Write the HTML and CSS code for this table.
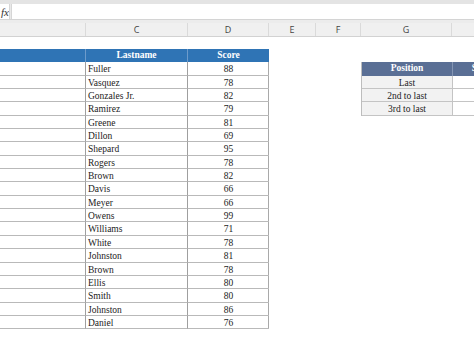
FILE: index.html
```html
<!DOCTYPE html>
<html>
<head>
<meta charset="utf-8">
<link rel="stylesheet" href="styles.css">
</head>
<body>
<div class="app">
  <div class="topstrip"></div>
  <div class="formula">
    <div class="fx"><span>fx</span></div>
    <div class="fsep"></div>
    <div class="finput"></div>
  </div>
  <div class="midstrip"></div>
  <div class="colheads">
    <div class="ch w-b"></div>
    <div class="ch w-c">C</div>
    <div class="ch w-d">D</div>
    <div class="ch w-e">E</div>
    <div class="ch w-f">F</div>
    <div class="ch w-g">G</div>
    <div class="ch w-h"></div>
  </div>
  <div class="sheet">
    <div class="main">
      <div class="hd"></div><div class="hd">Lastname</div><div class="hd">Score</div>
      <div class="c"></div><div class="c name">Fuller</div><div class="c num">88</div>
      <div class="c"></div><div class="c name">Vasquez</div><div class="c num">78</div>
      <div class="c"></div><div class="c name">Gonzales Jr.</div><div class="c num">82</div>
      <div class="c"></div><div class="c name">Ramirez</div><div class="c num">79</div>
      <div class="c"></div><div class="c name">Greene</div><div class="c num">81</div>
      <div class="c"></div><div class="c name">Dillon</div><div class="c num">69</div>
      <div class="c"></div><div class="c name">Shepard</div><div class="c num">95</div>
      <div class="c"></div><div class="c name">Rogers</div><div class="c num">78</div>
      <div class="c"></div><div class="c name">Brown</div><div class="c num">82</div>
      <div class="c"></div><div class="c name">Davis</div><div class="c num">66</div>
      <div class="c"></div><div class="c name">Meyer</div><div class="c num">66</div>
      <div class="c"></div><div class="c name">Owens</div><div class="c num">99</div>
      <div class="c"></div><div class="c name">Williams</div><div class="c num">71</div>
      <div class="c"></div><div class="c name">White</div><div class="c num">78</div>
      <div class="c"></div><div class="c name">Johnston</div><div class="c num">81</div>
      <div class="c"></div><div class="c name">Brown</div><div class="c num">78</div>
      <div class="c"></div><div class="c name">Ellis</div><div class="c num">80</div>
      <div class="c"></div><div class="c name">Smith</div><div class="c num">80</div>
      <div class="c"></div><div class="c name">Johnston</div><div class="c num">86</div>
      <div class="c"></div><div class="c name">Daniel</div><div class="c num">76</div>
    </div>
    <div class="pos">
      <div class="ph">Position</div><div class="ph">Score</div>
      <div class="pc">Last</div><div class="pv"></div>
      <div class="pc">2nd to last</div><div class="pv"></div>
      <div class="pc">3rd to last</div><div class="pv"></div>
    </div>
  </div>
</div>
</body>
</html>
```
FILE: styles.css
```css
* { box-sizing: border-box; }
html, body { margin: 0; padding: 0; background: #fff; }
body { width: 474px; height: 355px; overflow: hidden; }
.app { width: 474px; }

.topstrip { height: 4px; background: #e4e4e4; }
.formula { display: flex; height: 16px; background: #fff; border-bottom: 1px solid #d4d4d4; }
.fx { width: 9px; overflow: hidden; display: flex; justify-content: flex-end; align-items: center; }
.fx span { font-family: "Liberation Serif", serif; font-style: italic; font-size: 11px; color: #333; white-space: nowrap; }
.fsep { width: 3px; background: #e9e9e9; border-left: 1px solid #d6d6d6; border-right: 1px solid #d6d6d6; }
.finput { flex: 1; background: #fff; }
.midstrip { height: 3px; background: #ececec; }

.colheads { display: flex; height: 14px; background: #f0f0f0; border-bottom: 1px solid #d2d2d2; }
.ch { flex: none; height: 100%; border-right: 1px solid #dadada; font-family: "Open Sans", "Noto Sans", sans-serif; font-size: 9px; color: #444; display: flex; align-items: center; justify-content: center; }
.w-b { width: 86px; }
.w-c { width: 102px; }
.w-d { width: 81px; }
.w-e { width: 47px; }
.w-f { width: 45px; }
.w-g { width: 91px; }
.w-h { width: 61px; }

.sheet { display: flex; align-items: flex-start; margin-top: 12px; }
.main { display: grid; grid-template-columns: 86px 102px 81px; grid-auto-rows: 13.35px; width: 269px; border-right: 1px solid #a9a9a9; }
.hd { background: #2f74b5; color: #fff; font-family: "Liberation Serif", serif; font-weight: bold; font-size: 9.5px; text-align: center; line-height: 13.35px; border-right: 1px solid #6d9bcb; }
.main .hd:nth-child(3) { border-right: none; }
.c { border-bottom: 1px solid #b9b9b9; border-right: 1px solid #9f9f9f; font-family: "Liberation Serif", serif; font-size: 9.5px; color: #222; line-height: 13px; padding-top: 1px; white-space: nowrap; }
.c.num { border-right: none; text-align: center; }
.c.name { padding-left: 2px; }

.pos { display: grid; grid-template-columns: 91px 61px; grid-auto-rows: 13.35px; margin-top: 13.35px; margin-left: 92px; flex: none; border-left: 1px solid #bdbdbd; }
.ph { background: #5a6f95; color: #fff; font-family: "Liberation Serif", serif; font-weight: bold; font-size: 9.5px; text-align: center; line-height: 13.35px; border-right: 1px solid #8495b3; white-space: nowrap; overflow: hidden; }
.pc { background: #f2f2f2; border-bottom: 1px solid #c4c4c4; border-right: 1px solid #c4c4c4; font-family: "Liberation Serif", serif; font-size: 9.5px; color: #222; text-align: center; line-height: 13px; padding-top: 1px; white-space: nowrap; }
.pv { background: #fff; border-bottom: 1px solid #c4c4c4; border-right: 1px solid #c4c4c4; }
```
